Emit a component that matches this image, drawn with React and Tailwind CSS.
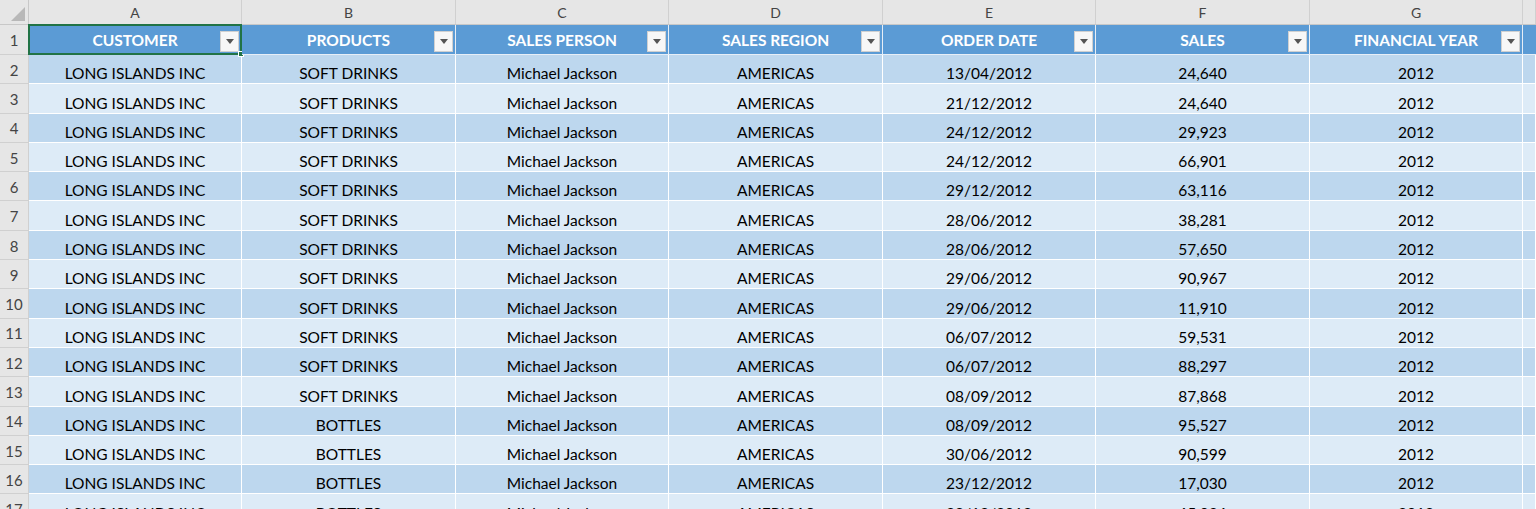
import React from "react";

const columns = ["A", "B", "C", "D", "E", "F", "G", ""];
const headers = [
  "CUSTOMER",
  "PRODUCTS",
  "SALES PERSON",
  "SALES REGION",
  "ORDER DATE",
  "SALES",
  "FINANCIAL YEAR",
];

const rows = [
  ["SOFT DRINKS", "13/04/2012", "24,640"],
  ["SOFT DRINKS", "21/12/2012", "24,640"],
  ["SOFT DRINKS", "24/12/2012", "29,923"],
  ["SOFT DRINKS", "24/12/2012", "66,901"],
  ["SOFT DRINKS", "29/12/2012", "63,116"],
  ["SOFT DRINKS", "28/06/2012", "38,281"],
  ["SOFT DRINKS", "28/06/2012", "57,650"],
  ["SOFT DRINKS", "29/06/2012", "90,967"],
  ["SOFT DRINKS", "29/06/2012", "11,910"],
  ["SOFT DRINKS", "06/07/2012", "59,531"],
  ["SOFT DRINKS", "06/07/2012", "88,297"],
  ["SOFT DRINKS", "08/09/2012", "87,868"],
  ["BOTTLES", "08/09/2012", "95,527"],
  ["BOTTLES", "30/06/2012", "90,599"],
  ["BOTTLES", "23/12/2012", "17,030"],
  ["BOTTLES", "28/12/2012", "65,036"],
];

const grid =
  "grid grid-cols-[29px_213px_214px_213px_214px_213px_214px_213px_1fr]";

const FilterButton = () => (
  <div className="absolute right-[2px] bottom-[2px] w-[19px] h-[21px] bg-[#f7f7f7] border border-[#d0d0d0] flex items-center justify-center">
    <svg width="8" height="5" viewBox="0 0 8 5">
      <path d="M0 0h8L4 5z" fill="#555" />
    </svg>
  </div>
);

const App = () => {
  return (
    <div
      className="w-[1536px] h-[509px] overflow-hidden bg-white text-[15.5px] text-[#111]"
      style={{ fontFamily: "Lato, 'Liberation Sans', sans-serif" }}
    >
      {/* column letters */}
      <div className={`${grid} h-[25px] bg-[#e6e6e6] border-b border-[#c8c8c8]`}>
        <div className="relative border-r border-[#c8c8c8]">
          <svg className="absolute right-[3px] bottom-[3px]" width="14" height="14" viewBox="0 0 14 14">
            <path d="M14 0V14H0z" fill="#b8b8b8" />
          </svg>
        </div>
        {columns.map((c, i) => (
          <div
            key={i}
            className="flex items-center justify-center text-[14px] text-[#444] border-r border-[#d0d0d0]"
          >
            {c}
          </div>
        ))}
      </div>

      {/* header row */}
      <div className={`${grid} h-[30px]`}>
        <div className="flex items-end justify-center pb-[3px] text-[15px] text-[#444] bg-[#e6e6e6] border-r border-b border-[#d0d0d0]">
          1
        </div>
        {headers.map((h, i) => (
          <div
            key={h}
            className="relative flex items-center justify-center bg-[#5b9bd5] text-white font-bold border-r border-b border-[#e6eef7]"
          >
            <span className="pt-[2px]">{h}</span>
            <FilterButton />
            {i === 0 && (
              <div className="absolute -inset-[1px] border-2 border-[#217346]">
                <div className="absolute -right-[4px] -bottom-[4px] w-[6px] h-[6px] bg-[#217346] border border-white" />
              </div>
            )}
          </div>
        ))}
        <div className="bg-[#5b9bd5] border-b border-[#e6eef7]" />
      </div>

      {/* data rows */}
      {rows.map((r, i) => {
        const band = i % 2 === 0 ? "bg-[#bdd7ee]" : "bg-[#ddebf7]";
        const cells = [
          "LONG ISLANDS INC",
          r[0],
          "Michael Jackson",
          "AMERICAS",
          r[1],
          r[2],
          "2012",
          "",
        ];
        return (
          <div key={i} className={`${grid} h-[29.3px]`}>
            <div className="flex items-end justify-center pb-[2px] text-[15px] text-[#444] bg-[#e6e6e6] border-r border-b border-[#d0d0d0]">
              {i + 2}
            </div>
            {cells.map((v, j) => (
              <div
                key={j}
                className={`flex items-end justify-center pb-[1px] leading-[18px] whitespace-nowrap text-black ${band} border-b border-r border-white`}
              >
                {v}
              </div>
            ))}
          </div>
        );
      })}
    </div>
  );
};

export default App;
